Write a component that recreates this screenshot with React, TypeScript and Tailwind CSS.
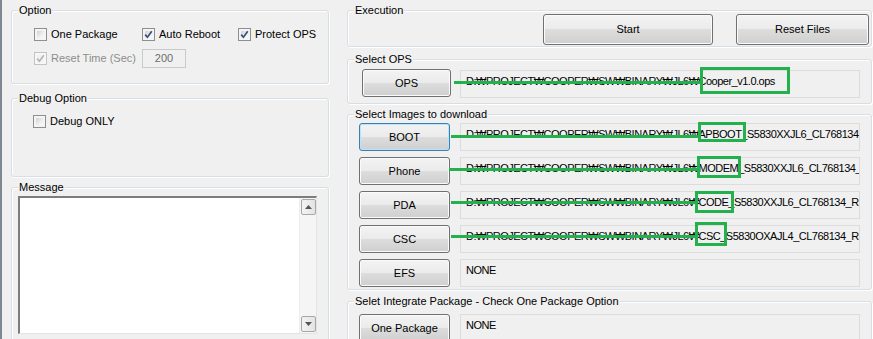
import React from 'react';

const PREFIX = 'D:\u20A9PROJECT\u20A9COOPER\u20A9SW\u20A9BINARY\u20A9JL6\u20A9';

function Check({ checked = false, disabled = false }: { checked?: boolean; disabled?: boolean }) {
  return (
    <span
      className={`relative block w-[13px] h-[13px] shrink-0 border ${
        disabled ? 'border-[#c4c4c4] bg-[#f7f7f7]' : 'border-[#8e8f8f] bg-[#f4f4f4]'
      }`}
    >
      <span
        className={`absolute inset-[2px] ${
          disabled ? 'bg-[#f2f2f2]' : 'bg-[linear-gradient(135deg,#cfd1d4_0%,#eeeeee_60%,#fbfbfb_100%)]'
        }`}
      />
      {checked && (
        <svg viewBox="0 0 11 11" className="absolute left-0 top-0 w-[11px] h-[11px]">
          <path
            d="M2.2 5.6 L4.4 8.2 L8.8 2.2"
            fill="none"
            stroke={disabled ? '#b5b5b5' : '#3b4f7f'}
            strokeWidth="1.7"
          />
        </svg>
      )}
    </span>
  );
}

function CheckItem({ label, checked, disabled, className = '' }: { label: string; checked?: boolean; disabled?: boolean; className?: string }) {
  return (
    <div className={`flex items-center gap-[4px] ${className}`}>
      <Check checked={checked} disabled={disabled} />
      <span className={disabled ? 'text-[#8d8d8d]' : ''}>{label}</span>
    </div>
  );
}

function Group({ label, className = '', children }: { label: string; className?: string; children?: React.ReactNode }) {
  return (
    <div className={`relative shrink-0 border border-[#d5dfe5] rounded-[3px] shadow-[inset_1px_1px_0_#ffffff,1px_1px_0_#ffffff] ${className}`}>
      <span className="absolute -top-[8px] left-[6px] px-[1px] bg-[#f0f0f0] leading-[14px] whitespace-nowrap">{label}</span>
      {children}
    </div>
  );
}

function WinButton({ label, className = '', focused = false }: { label: string; className?: string; focused?: boolean }) {
  return (
    <div
      className={`flex items-center justify-center shrink-0 rounded-[3px] border bg-[linear-gradient(to_bottom,#f3f3f3_0%,#ebebeb_50%,#dddddd_50%,#cfcfcf_100%)] ${
        focused
          ? 'border-[#3c7fb1] shadow-[inset_0_0_0_1px_#b9e3f9]'
          : 'border-[#707070] shadow-[inset_0_0_0_1px_#fbfbfb]'
      } ${className}`}
    >
      {label}
    </div>
  );
}

function PathBox({ text, className = '' }: { text: string; className?: string }) {
  return (
    <div
      className={`w-[400px] h-[28px] shrink-0 border border-[#dcdcdc] bg-[#f0f0f0] pl-[5px] pt-[3px] leading-[14px] whitespace-nowrap overflow-hidden tracking-[-0.5px] ${className}`}
    >
      {text}
    </div>
  );
}

function ImageRow({ label, text, focused }: { label: string; text: string; focused?: boolean }) {
  return (
    <div className="flex items-start gap-[10px]">
      <WinButton label={label} focused={focused} className="w-[91px] h-[28px]" />
      <PathBox text={text} />
    </div>
  );
}

function ScrollArrow({ up }: { up?: boolean }) {
  return (
    <div className="w-[15px] h-[16px] rounded-[2px] border border-[#a7a7a7] bg-[linear-gradient(to_right,#f3f3f3,#e3e3e3)] flex items-center justify-center">
      <svg viewBox="0 0 7 4" className="w-[7px] h-[4px]">
        <path d={up ? 'M0 4 L3.5 0 L7 4 Z' : 'M0 0 L3.5 4 L7 0 Z'} fill="#555555" />
      </svg>
    </div>
  );
}

type Mark = { lx: number; lw: number; ly: number; rx: number; ry: number; rw: number; rh: number };

const marks: Mark[] = [
  { lx: 452, lw: 247, ly: 81, rx: 698, ry: 67, rw: 90, rh: 27 },
  { lx: 449, lw: 248, ly: 135, rx: 696, ry: 122, rw: 48, rh: 20 },
  { lx: 447, lw: 249, ly: 168, rx: 695, ry: 156, rw: 44, rh: 22 },
  { lx: 449, lw: 245, ly: 201, rx: 693, ry: 191, rw: 39, rh: 22 },
  { lx: 449, lw: 245, ly: 235, rx: 693, ry: 222, rw: 32, rh: 24 },
];

export default function App() {
  return (
    <div className="relative w-[873px] h-[339px] overflow-hidden flex bg-[#f0f0f0] border-l-[2px] border-[#7f8792] font-['Liberation_Sans',Arial,sans-serif] text-[11px] text-black">
      {/* left column */}
      <div className="w-[345px] shrink-0 flex flex-col pl-[9px] pt-[10px]">
        <Group label="Option" className="w-[318px] h-[74px] pt-[16px] pl-[22px]">
          <div className="flex items-center h-[14px]">
            <CheckItem label="One Package" className="w-[108px]" />
            <CheckItem label="Auto Reboot" checked className="w-[96px]" />
            <CheckItem label="Protect OPS" checked />
          </div>
          <div className="flex items-center mt-[8px]">
            <CheckItem label="Reset Time (Sec)" checked disabled className="w-[108px]" />
            <div className="w-[44px] h-[19px] border border-[#c9c9c9] bg-[#f0f0f0] flex items-center justify-center text-[#6d6d6d]">200</div>
          </div>
        </Group>

        <Group label="Debug Option" className="w-[318px] h-[79px] mt-[14px] pt-[14px] pl-[21px]">
          <CheckItem label="Debug ONLY" />
        </Group>

        <Group label="Message" className="w-[318px] h-[170px] mt-[10px] pt-[8px] pl-[6px]">
          <div className="w-[299px] h-[138px] bg-white border-t-[2px] border-l-[2px] border-r border-b border-t-[#7d7d7d] border-l-[#7d7d7d] border-r-[#e3e3e3] border-b-[#e3e3e3] flex justify-end">
            <div className="w-[17px] h-full bg-[#f5f5f5] border-l border-[#ededed] flex flex-col justify-between items-center pt-[1px] pb-[1px]">
              <ScrollArrow up />
              <ScrollArrow />
            </div>
          </div>
        </Group>
      </div>

      {/* right column */}
      <div className="w-[525px] shrink-0 flex flex-col pt-[10px]">
        <Group label="Execution" className="h-[37px] pt-[3px] pl-[195px]">
          <div className="flex gap-[23px]">
            <WinButton label="Start" className="w-[170px] h-[31px]" />
            <WinButton label="Reset Files" className="w-[133px] h-[31px]" />
          </div>
        </Group>

        <Group label="Select OPS" className="h-[45px] mt-[12px] pt-[9px] pl-[14px]">
          <div className="flex items-start gap-[9px]">
            <WinButton label="OPS" className="w-[89px] h-[28px]" />
            <PathBox text={`${PREFIX}Cooper_v1.0.ops`} className="mt-[1px]" />
          </div>
        </Group>

        <Group label="Select Images to download" className="h-[176px] mt-[10px] pt-[8px] pl-[11px]">
          <div className="flex flex-col gap-[6px]">
            <ImageRow label="BOOT" text={`${PREFIX}APBOOT_S5830XXJL6_CL768134`} focused />
            <ImageRow label="Phone" text={`${PREFIX}MODEM_S5830XXJL6_CL768134_`} />
            <ImageRow label="PDA" text={`${PREFIX}CODE_S5830XXJL6_CL768134_R`} />
            <ImageRow label="CSC" text={`${PREFIX}CSC_S5830OXAJL4_CL768134_R`} />
            <ImageRow label="EFS" text="NONE" />
          </div>
        </Group>

        <Group label="Selet Integrate Package - Check One Package Option" className="h-[60px] mt-[11px] pt-[12px] pl-[11px]">
          <ImageRow label="One Package" text="NONE" />
        </Group>
      </div>

      {/* green annotation overlay */}
      {marks.map((m, i) => (
        <React.Fragment key={i}>
          <div className="absolute h-[3px] bg-[#22b14c]" style={{ left: m.lx, top: m.ly, width: m.lw }} />
          <div className="absolute border-[3px] border-[#22b14c]" style={{ left: m.rx, top: m.ry, width: m.rw, height: m.rh }} />
        </React.Fragment>
      ))}
    </div>
  );
}
